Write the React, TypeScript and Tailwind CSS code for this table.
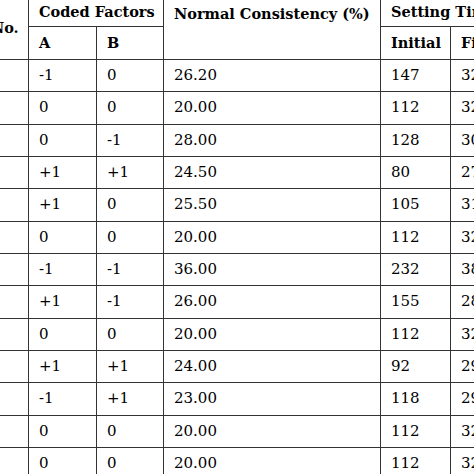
import React from 'react'

const rows = [
  ['1', '-1', '0', '26.20', '147', '320'],
  ['2', '0', '0', '20.00', '112', '320'],
  ['3', '0', '-1', '28.00', '128', '300'],
  ['4', '+1', '+1', '24.50', '80', '270'],
  ['5', '+1', '0', '25.50', '105', '310'],
  ['6', '0', '0', '20.00', '112', '320'],
  ['7', '-1', '-1', '36.00', '232', '380'],
  ['8', '+1', '-1', '26.00', '155', '280'],
  ['9', '0', '0', '20.00', '112', '320'],
  ['10', '+1', '+1', '24.00', '92', '290'],
  ['11', '-1', '+1', '23.00', '118', '290'],
  ['12', '0', '0', '20.00', '112', '320'],
  ['13', '0', '0', '20.00', '112', '320'],
]

const cell = 'border border-[#333] px-[10px] text-left align-middle'

const App = () => {
  return (
    <div className="w-[474px] h-[474px] overflow-hidden bg-white text-black font-['DejaVu_Serif',serif] text-[15px] leading-none">
      <table className="table-fixed border-collapse -ml-[60px] -mt-[7px] w-[590px]">
        <colgroup>
          <col className="w-[88px]" />
          <col className="w-[68px]" />
          <col className="w-[67px]" />
          <col className="w-[217px]" />
          <col className="w-[70px]" />
          <col className="w-[80px]" />
        </colgroup>
        <thead className="font-bold text-[14.5px]">
          <tr className="h-[33px]">
            <th rowSpan={2} className={`${cell} whitespace-nowrap text-right pr-[12px] pt-[4px]`}>Exp. No.</th>
            <th colSpan={2} className={`${cell} whitespace-nowrap pt-[4px]`}>Coded Factors</th>
            <th rowSpan={2} className={`${cell} align-top pt-[13px] whitespace-nowrap`}>Normal Consistency (%)</th>
            <th colSpan={2} className={`${cell} whitespace-nowrap pt-[4px]`}>Setting Time (min)</th>
          </tr>
          <tr className="h-[33px]">
            <th className={cell}>A</th>
            <th className={cell}>B</th>
            <th className={cell}>Initial</th>
            <th className={cell}>Final</th>
          </tr>
        </thead>
        <tbody>
          {rows.map((r) => (
            <tr key={r[0]} className="h-[32.33px]">
              {r.map((v, i) => (
                <td key={i} className={cell}>
                  {v}
                </td>
              ))}
            </tr>
          ))}
        </tbody>
      </table>
    </div>
  )
}

export default App
